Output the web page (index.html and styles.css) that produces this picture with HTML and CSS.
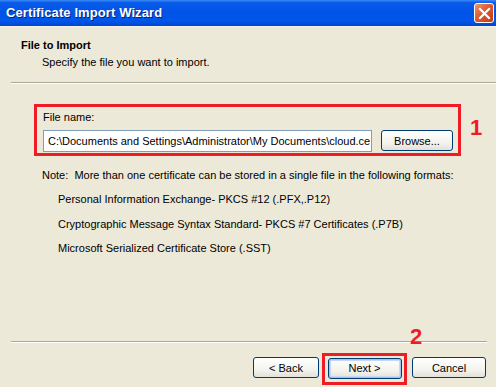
FILE: index.html
```html
<!DOCTYPE html>
<html>
<head>
<meta charset="utf-8">
<link rel="stylesheet" href="styles.css">
</head>
<body>
<div class="window">
  <div class="titlebar">
    <span class="title">Certificate Import Wizard</span>
    <span class="close">
      <svg width="13" height="13" viewBox="0 0 13 13"><path d="M2 2 L11 11 M11 2 L2 11" stroke="#fff" stroke-width="2.2" stroke-linecap="square"/></svg>
    </span>
  </div>
  <div class="header">
    <div class="h-title">File to Import</div>
    <div class="h-sub">Specify the file you want to import.</div>
  </div>
  <div class="sep sep-top"></div>
  <div class="content">
    <div class="file-row">
      <div class="mark-box file-group">
        <div class="label">File name:</div>
        <div class="input-row">
          <div class="textbox"><span>C:\Documents and Settings\Administrator\My Documents\cloud.ce</span></div>
          <div class="btn browse">Browse...</div>
        </div>
      </div>
      <div class="num num1">1</div>
    </div>
    <div class="note">Note:&nbsp; More than one certificate can be stored in a single file in the following formats:</div>
    <ul class="formats">
      <li>Personal Information Exchange- PKCS #12 (.PFX,.P12)</li>
      <li>Cryptographic Message Syntax Standard- PKCS #7 Certificates (.P7B)</li>
      <li>Microsoft Serialized Certificate Store (.SST)</li>
    </ul>
  </div>
  <div class="footer">
    <div class="sep sep-bottom"></div>
    <div class="num num2">2</div>
    <div class="buttons">
      <div class="btn back">&lt; Back</div>
      <div class="mark-box next-mark"><div class="btn next">Next &gt;</div></div>
      <div class="btn cancel">Cancel</div>
    </div>
  </div>
</div>
</body>
</html>
```
FILE: styles.css
```css
html, body {
  margin: 0;
  padding: 0;
}
body {
  width: 496px;
  height: 387px;
  overflow: hidden;
  background: #ECE9D8;
  font-family: "Liberation Sans", Arial, sans-serif;
  font-size: 11px;
  color: #000;
}
.window {
  width: 496px;
  height: 387px;
  display: flex;
  flex-direction: column;
  position: relative;
}
.titlebar {
  height: 27px;
  box-sizing: border-box;
  background: linear-gradient(#3A8CF7 0%, #0A5CEA 10%, #0053E6 45%, #0056EA 80%, #0046CF 100%);
  display: flex;
  align-items: center;
  justify-content: space-between;
  padding: 0 2px 1px 6px;
  border-bottom: 1px solid #F4F2EA;
}
.title {
  color: #fff;
  font-weight: bold;
  font-size: 13px;
  text-shadow: 1px 1px 0 #0A1F7A;
  letter-spacing: 0.1px;
}
.close {
  width: 20px;
  height: 20px;
  box-sizing: border-box;
  border: 1px solid #fff;
  border-radius: 3px;
  background: linear-gradient(135deg, #F0966E 0%, #DE5A32 45%, #C03A12 100%);
  display: flex;
  align-items: center;
  justify-content: center;
  margin-top: 1px;
}
.header {
  padding: 12px 0 0 21px;
  height: 44px;
  box-sizing: border-box;
  margin-bottom: 11px;
}
.h-title {
  font-weight: bold;
  line-height: 13px;
}
.h-sub {
  margin-top: 4px;
  padding-left: 21px;
  line-height: 13px;
}
.sep {
  height: 1px;
  background: #ACA899;
  border-bottom: 1px solid #FFFFFF;
}
.sep-top {
  margin-left: 11px;
}
.content {
  padding: 20px 0 0 34px;
  flex: 1;
}
.file-row {
  display: flex;
  align-items: flex-start;
}
.mark-box {
  border: 3px solid #EE1C25;
}
.file-group {
  box-sizing: border-box;
  width: 427px;
  height: 52px;
  padding: 4px 0 0 6px;
}
.label {
  line-height: 13px;
  height: 13px;
}
.input-row {
  display: flex;
  margin-top: 6px;
  align-items: flex-start;
}
.textbox {
  width: 329px;
  height: 22px;
  box-sizing: border-box;
  border: 1px solid #7F9DB9;
  background: #fff;
  overflow: hidden;
  white-space: nowrap;
  padding: 4px 0 0 4px;
  line-height: 13px;
  font-size: 11px;
}
.btn {
  box-sizing: border-box;
  border: 1px solid #003C74;
  border-radius: 3px;
  background: linear-gradient(#FFFFFF 0%, #F4F3EE 60%, #E3E1D8 100%);
  display: flex;
  align-items: center;
  justify-content: center;
  height: 21px;
  font-size: 11px;
}
.browse {
  width: 72px;
  margin-left: 9px;
}
.num {
  color: #EE1C25;
  font-weight: bold;
  font-size: 22px;
  line-height: 22px;
}
.num1 {
  margin: 13px 0 0 9px;
}
.note {
  margin: 13px 0 0 8px;
  line-height: 13px;
}
.formats {
  list-style: none;
  margin: 11px 0 0 24px;
  padding: 0;
}
.formats li {
  line-height: 13px;
  margin-bottom: 11.5px;
}
.footer {
  height: 46px;
  position: relative;
}
.sep-bottom {
  margin: 0 9px 0 11px;
}
.num2 {
  position: absolute;
  left: 410px;
  top: -15px;
}
.buttons {
  display: flex;
  justify-content: flex-end;
  align-items: center;
  padding: 7px 10px 0 0;
}
.back {
  width: 66px;
  margin-right: 3px;
}
.next-mark {
  width: 85px;
  height: 32px;
  box-sizing: border-box;
  display: flex;
  align-items: center;
  justify-content: center;
  margin-top: 3px;
}
.next {
  width: 74px;
  box-shadow: inset 0 0 0 1px #A7C2EE, inset 0 0 0 2px #C6D8F5;
  margin-top: -2px;
}
.cancel {
  width: 74px;
  margin-left: 5px;
}
```
